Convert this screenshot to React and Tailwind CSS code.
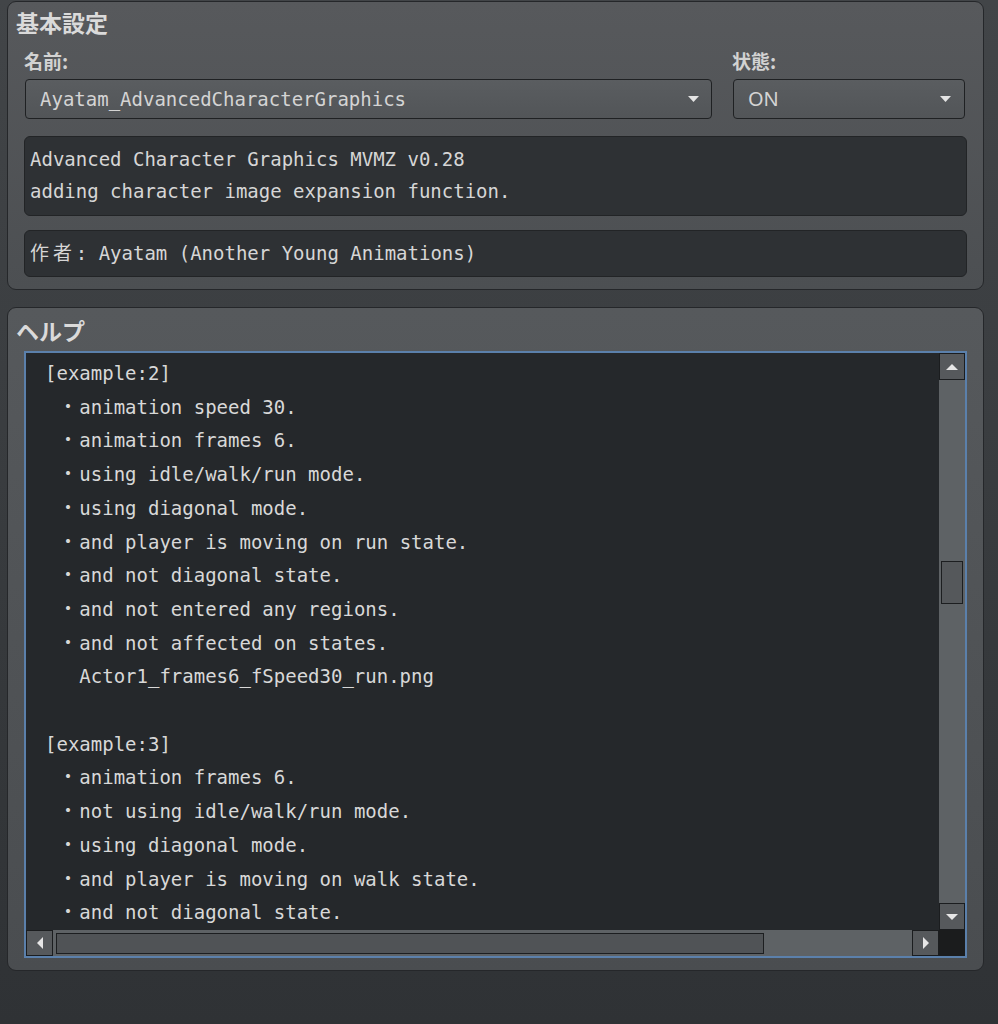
const mono = "font-['DejaVu_Sans_Mono','Noto_Sans_CJK_JP',monospace]";
const ui = "font-['Noto_Sans_CJK_JP','Noto_Sans',sans-serif]";

const helpLines = [
  { t: '[example:2]' },
  { b: 'animation speed 30.' },
  { b: 'animation frames 6.' },
  { b: 'using idle/walk/run mode.' },
  { b: 'using diagonal mode.' },
  { b: 'and player is moving on run state.' },
  { b: 'and not diagonal state.' },
  { b: 'and not entered any regions.' },
  { b: 'and not affected on states.' },
  { t: '   Actor1_frames6_fSpeed30_run.png' },
  { t: ' ' },
  { t: '[example:3]' },
  { b: 'animation frames 6.' },
  { b: 'not using idle/walk/run mode.' },
  { b: 'using diagonal mode.' },
  { b: 'and player is moving on walk state.' },
  { b: 'and not diagonal state.' },
];

const Caret = () => (
  <svg width="11" height="6" viewBox="0 0 11 6">
    <path d="M0 0 L11 0 L5.5 6 Z" fill="#e4e4e4" />
  </svg>
);

const Select = ({ value, className, textClass }) => (
  <div
    className={`h-[40px] flex items-center justify-between pl-[14px] pr-[12px] rounded-[4px] border border-[#1f2123] bg-gradient-to-b from-[#5a5d60] to-[#525558] ${className}`}
  >
    <span className={textClass}>{value}</span>
    <Caret />
  </div>
);

const Arrow = ({ dir }) => {
  const paths = {
    up: 'M0 6 L12 6 L6 0 Z',
    down: 'M0 0 L12 0 L6 6 Z',
    left: 'M6 0 L6 12 L0 6 Z',
    right: 'M0 0 L0 12 L6 6 Z',
  };
  const vert = dir === 'up' || dir === 'down';
  return (
    <svg width={vert ? 12 : 6} height={vert ? 6 : 12} viewBox={vert ? '0 0 12 6' : '0 0 6 12'}>
      <path d={paths[dir]} fill="#e6e6e6" />
    </svg>
  );
};

const ScrollButton = ({ dir, className }) => (
  <div className={`flex items-center justify-center bg-[#56595c] border border-[#1b1d1f] ${className}`}>
    <Arrow dir={dir} />
  </div>
);

export default function App() {
  return (
    <div className="w-[998px] h-[1024px] overflow-hidden bg-gradient-to-b from-[#424548] to-[#2f3235] pl-[7px] pr-[14px] pt-px text-[#d6d6d6]">
      <section className="h-[289px] rounded-[9px] border border-[#25272a] bg-gradient-to-b from-[#57595c] to-[#4c4f52] px-[16px] pt-[6px]">
        <h2 className={`${ui} -ml-[8px] text-[23px] leading-[28px] font-bold text-[#dadada]`}>基本設定</h2>
        <div className="mt-[13px] flex gap-[21px] pl-px pr-[2px]">
          <div className="flex-1">
            <div className={`${ui} -ml-px text-[19px] leading-[24px] font-bold text-[#d2d2d2]`}>名前:</div>
            <Select
              value="Ayatam_AdvancedCharacterGraphics"
              className="mt-[6px]"
              textClass={`${mono} text-[19px] text-[#d4d4d4]`}
            />
          </div>
          <div className="w-[232px]">
            <div className={`${ui} -ml-px text-[19px] leading-[24px] font-bold text-[#d2d2d2]`}>状態:</div>
            <Select
              value="ON"
              className="mt-[6px] pr-[13px]"
              textClass="font-['Noto_Sans',sans-serif] text-[20px] text-[#d4d4d4]"
            />
          </div>
        </div>
        <div className={`${mono} mt-[17px] h-[80px] rounded-[6px] border border-[#222426] bg-[#2e3134] pl-[5px] pt-[6px] text-[19px] leading-[32px] whitespace-pre`}>
          <div>Advanced Character Graphics MVMZ v0.28</div>
          <div>adding character image expansion function.</div>
        </div>
        <div className={`${mono} mt-[14px] h-[47px] flex items-center rounded-[6px] border border-[#222426] bg-[#2e3134] pl-[5px] text-[19px] whitespace-pre`}>
          <span className="inline-block w-[22.9px]">作</span>
          <span className="inline-block w-[22.9px]">者</span>: Ayatam (Another Young Animations)
        </div>
      </section>

      <section className="mt-[17px] h-[664px] rounded-[9px] border border-[#25272a] bg-gradient-to-b from-[#56595c] to-[#4a4d50] px-[16px] pt-[8px]">
        <h2 className={`${ui} -ml-[8px] text-[23px] leading-[28px] font-bold text-[#dadada]`}>ヘルプ</h2>
        <div className="mt-[7px] h-[607px] border-2 border-[#5b80ab] grid grid-cols-[1fr_26px] grid-rows-[1fr_26px]">
          <div className={`${mono} overflow-hidden bg-[#25282b] pl-[19px] pt-[4px] text-[19px] leading-[33.7px] whitespace-pre text-[#d8d8d8]`}>
            {helpLines.map((l, i) =>
              l.b ? (
                <div key={i}>
                  {' '}
                  <span className="inline-block w-[22.9px] text-center">・</span>
                  {l.b}
                </div>
              ) : (
                <div key={i}>{l.t}</div>
              )
            )}
          </div>
          <div className="flex flex-col bg-[#5e6265]">
            <ScrollButton dir="up" className="h-[27px]" />
            <div className="flex-1 flex flex-col px-[2px]">
              <div className="mt-[181px] h-[43px] bg-[#55585b] border border-[#1c1e20]" />
            </div>
            <ScrollButton dir="down" className="h-[27px]" />
          </div>
          <div className="flex bg-[#5e6265]">
            <ScrollButton dir="left" className="w-[27px]" />
            <div className="flex-1 flex items-center pl-[3px] pr-[148px]">
              <div className="w-full h-[21px] bg-[#505356] border border-[#1c1e20]" />
            </div>
            <ScrollButton dir="right" className="w-[27px]" />
          </div>
          <div className="bg-[#1b1c1d]" />
        </div>
      </section>
    </div>
  );
}
